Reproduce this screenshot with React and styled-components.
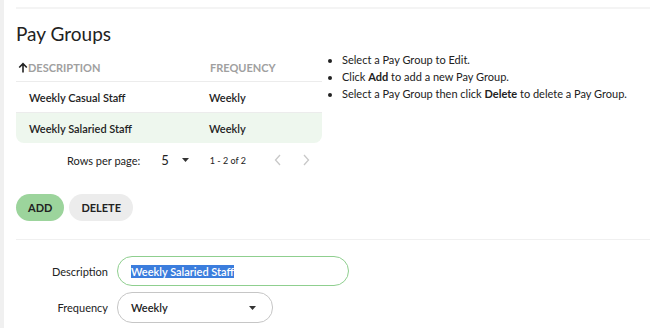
import React from 'react';
import styled, { createGlobalStyle } from 'styled-components';

const Global = createGlobalStyle`
  html, body { margin: 0; padding: 0; background: #fff; }
  body { font-family: Lato, "Noto Sans", sans-serif; color: #222; }
`;

const Page = styled.div`
  display: flex;
  width: 650px;
  height: 328px;
  overflow: hidden;
`;

const SideStrip = styled.div`
  width: 4px;
  background: #f0f0f0;
  flex-shrink: 0;
`;

const Main = styled.div`
  flex: 1;
  padding: 7px 0 0 12px;
`;

const TopRule = styled.div`
  height: 2px;
  background: #f4f4f4;
`;

const Title = styled.h1`
  margin: 13px 0 0;
  font-size: 19px;
  font-weight: 400;
  color: #222;
`;

const Columns = styled.div`
  display: flex;
  gap: 2px;
  margin-top: 8px;
`;

const TableWrap = styled.div`
  width: 306px;
`;

const Row = styled.div`
  display: grid;
  grid-template-columns: ${p => p.$head ? 192 : 180}px 1fr;
  align-items: center;
  height: ${p => p.$head ? 28 : 30}px;
  padding-left: ${p => p.$head ? 2 : 13}px;
  border-bottom: ${p => p.$last ? 'none' : '1px solid #ececec'};
  background: ${p => p.$selected ? '#eef7ee' : 'transparent'};
  border-radius: ${p => p.$selected ? '0 0 8px 8px' : '0'};
  font-size: 11px;
  font-weight: ${p => p.$head ? 700 : 600};
  color: ${p => p.$head ? '#a0a0a0' : '#222'};
`;

const HeadCell = styled.div`
  display: flex;
  align-items: center;
`;

const Pager = styled.div`
  display: flex;
  align-items: center;
  height: 34px;
  padding-left: 51px;
  font-size: 11px;
  color: #222;
`;

const PagerSelect = styled.div`
  display: flex;
  align-items: center;
  margin-left: 21px;
  font-size: 13px;
  gap: 13px;
`;

const Range = styled.span`
  margin-left: 21px;
  font-size: 9px;
`;

const Arrows = styled.div`
  display: flex;
  gap: 20px;
  margin-left: 28px;
  color: #c8c8c8;
`;

const Notes = styled.ul`
  margin: -2px 0 0;
  padding: 0 0 0 18px;
  font-size: 11px;
  line-height: 17px;
  color: #222;
  b { font-weight: 700; }
`;

const Buttons = styled.div`
  display: flex;
  gap: 5px;
  margin-top: 17px;
`;

const Pill = styled.button`
  height: 27px;
  padding: 0 12px;
  border: none;
  border-radius: 14px;
  background: ${p => p.$primary ? '#9cd49c' : '#ececec'};
  font-family: inherit;
  font-size: 11px;
  font-weight: 700;
  color: #222;
  cursor: pointer;
`;

const Divider = styled.div`
  height: 1px;
  background: #f0f0f0;
  margin-top: 18px;
`;

const Form = styled.div`
  display: grid;
  grid-template-columns: 92px auto;
  column-gap: 9px;
  row-gap: 6px;
  margin-top: 16px;
  align-items: center;
  justify-items: start;
`;

const Label = styled.label`
  justify-self: end;
  font-size: 11px;
  color: #222;
`;

const Field = styled.div`
  display: flex;
  align-items: center;
  justify-content: space-between;
  box-sizing: border-box;
  width: ${p => p.$w}px;
  height: ${p => p.$h}px;
  padding: 0 ${p => p.$pr || 12}px 0 13px;
  border: 1px solid ${p => p.$focus ? '#8fcf8f' : '#c6c6c6'};
  border-radius: 15px;
  font-size: 11px;
  font-weight: 600;
  color: #222;
`;

const Selected = styled.span`
  background: #3b7ddd;
  color: #fff;
`;

const Caret = () => (
  <svg width="7" height="4" viewBox="0 0 7 4"><path d="M0 0h7L3.5 4z" fill="#333" /></svg>
);

export default function App() {
  return (
    <Page>
      <Global />
      <SideStrip />
      <Main>
        <TopRule />
        <Title>Pay Groups</Title>
        <Columns>
          <TableWrap>
            <Row $head>
              <HeadCell>
                <svg width="10" height="11" viewBox="0 0 10 11"><path d="M5 10.5V2M1.2 5.5L5 1.6l3.8 3.9" stroke="#222" strokeWidth="1.6" fill="none" /></svg>
                DESCRIPTION
              </HeadCell>
              <HeadCell>FREQUENCY</HeadCell>
            </Row>
            <Row>
              <span>Weekly Casual Staff</span>
              <span>Weekly</span>
            </Row>
            <Row $selected $last>
              <span>Weekly Salaried Staff</span>
              <span>Weekly</span>
            </Row>
            <Pager>
              Rows per page:
              <PagerSelect>5 <Caret /></PagerSelect>
              <Range>1 - 2 of 2</Range>
              <Arrows>
                <svg width="8" height="12" viewBox="0 0 8 12"><path d="M6 1L1.5 6 6 11" stroke="#c8c8c8" strokeWidth="1.3" fill="none" /></svg>
                <svg width="8" height="12" viewBox="0 0 8 12"><path d="M2 1l4.5 5L2 11" stroke="#c8c8c8" strokeWidth="1.3" fill="none" /></svg>
              </Arrows>
            </Pager>
          </TableWrap>
          <Notes>
            <li>Select a Pay Group to Edit.</li>
            <li>Click <b>Add</b> to add a new Pay Group.</li>
            <li>Select a Pay Group then click <b>Delete</b> to delete a Pay Group.</li>
          </Notes>
        </Columns>
        <Buttons>
          <Pill $primary>ADD</Pill>
          <Pill>DELETE</Pill>
        </Buttons>
        <Divider />
        <Form>
          <Label>Description</Label>
          <Field $w={232} $h={30} $focus><Selected>Weekly Salaried Staff</Selected></Field>
          <Label>Frequency</Label>
          <Field $w={156} $h={31} $pr={16}>Weekly <Caret /></Field>
        </Form>
      </Main>
    </Page>
  );
}
